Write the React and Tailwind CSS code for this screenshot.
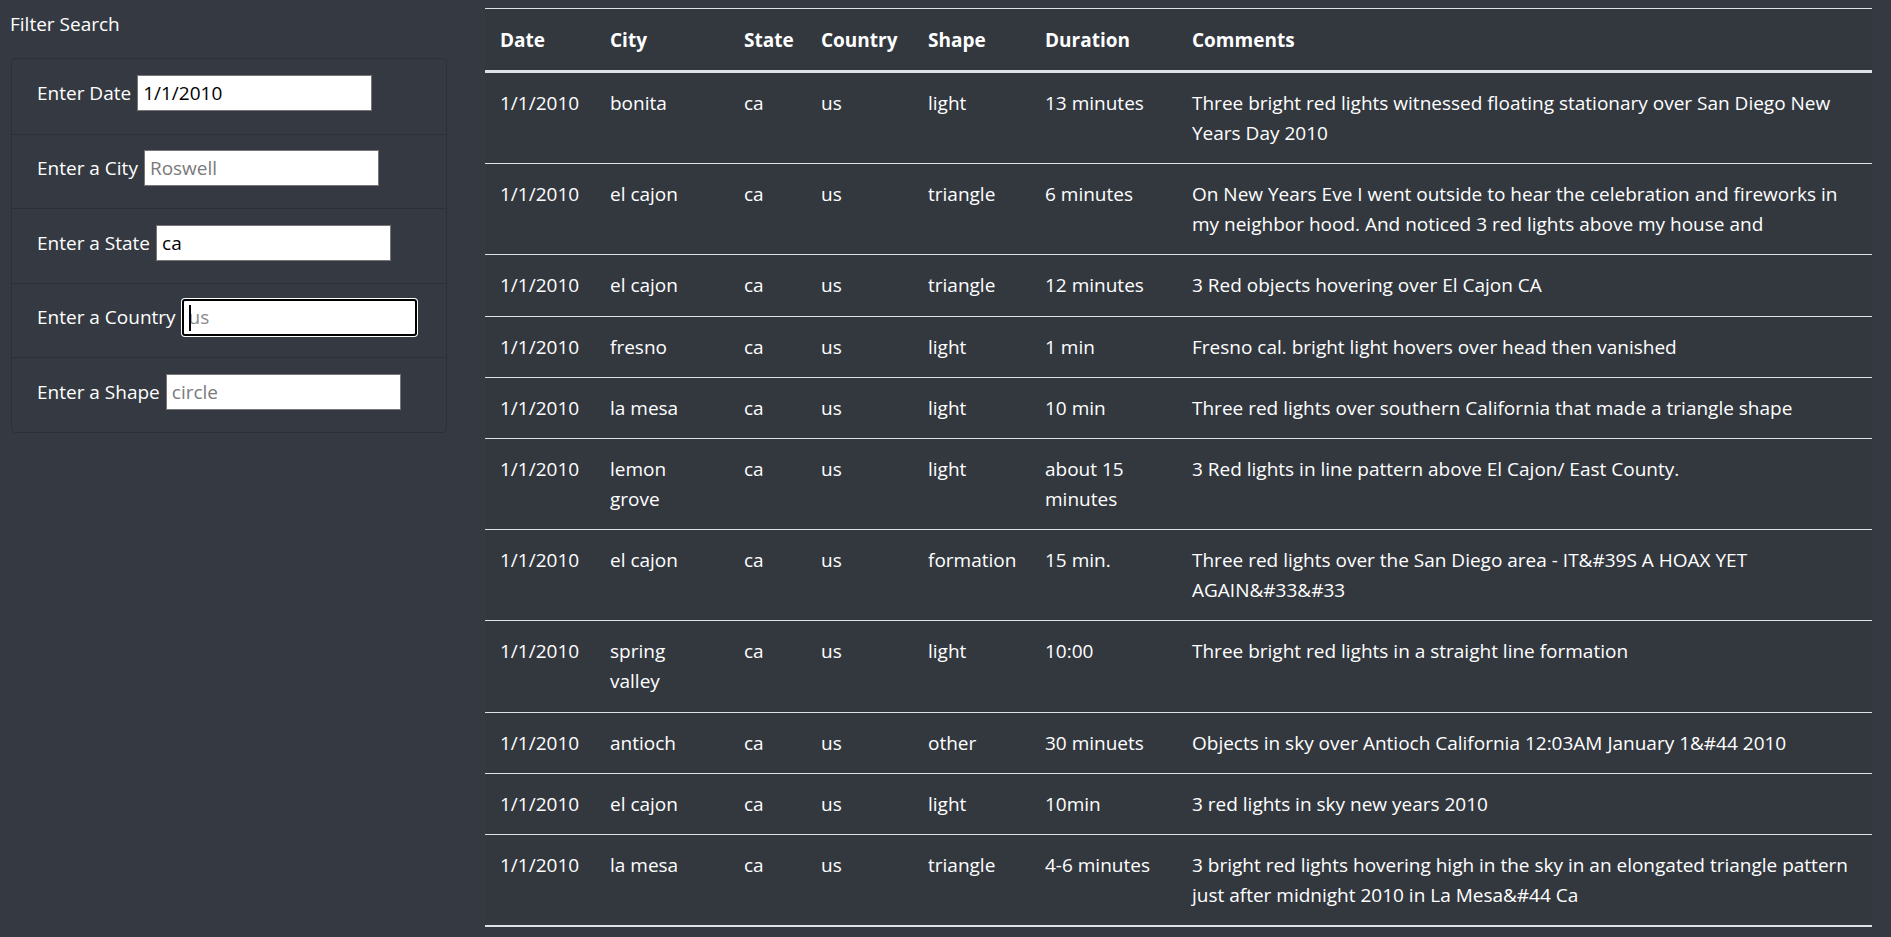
import { useState } from 'react';

const filters = [
  { id: 'date', label: 'Enter Date', value: '1/1/2010', placeholder: '' },
  { id: 'city', label: 'Enter a City', value: '', placeholder: 'Roswell' },
  { id: 'state', label: 'Enter a State', value: 'ca', placeholder: '' },
  { id: 'country', label: 'Enter a Country', value: '', placeholder: 'us', focused: true },
  { id: 'shape', label: 'Enter a Shape', value: '', placeholder: 'circle' },
];

const columns = [
  { key: 'date', label: 'Date', width: 'w-[110px]' },
  { key: 'city', label: 'City', width: 'w-[134px]' },
  { key: 'state', label: 'State', width: 'w-[77px]' },
  { key: 'country', label: 'Country', width: 'w-[107px]' },
  { key: 'shape', label: 'Shape', width: 'w-[117px]' },
  { key: 'duration', label: 'Duration', width: 'w-[147px]' },
  { key: 'comments', label: 'Comments', width: 'w-auto' },
];

// line breaks kept as they show in the report
const sightings = [
  ['1/1/2010', 'bonita', 'ca', 'us', 'light', '13 minutes', 'Three bright red lights witnessed floating stationary over San Diego New\nYears Day 2010'],
  ['1/1/2010', 'el cajon', 'ca', 'us', 'triangle', '6 minutes', 'On New Years Eve I went outside to hear the celebration and fireworks in\nmy neighbor hood. And noticed 3 red lights above my house and'],
  ['1/1/2010', 'el cajon', 'ca', 'us', 'triangle', '12 minutes', '3 Red objects hovering over El Cajon CA'],
  ['1/1/2010', 'fresno', 'ca', 'us', 'light', '1 min', 'Fresno cal. bright light hovers over head then vanished'],
  ['1/1/2010', 'la mesa', 'ca', 'us', 'light', '10 min', 'Three red lights over southern California that made a triangle shape'],
  ['1/1/2010', 'lemon\ngrove', 'ca', 'us', 'light', 'about 15\nminutes', '3 Red lights in line pattern above El Cajon/ East County.'],
  ['1/1/2010', 'el cajon', 'ca', 'us', 'formation', '15 min.', 'Three red lights over the San Diego area - IT&#39S A HOAX YET\nAGAIN&#33&#33'],
  ['1/1/2010', 'spring\nvalley', 'ca', 'us', 'light', '10:00', 'Three bright red lights in a straight line formation'],
  ['1/1/2010', 'antioch', 'ca', 'us', 'other', '30 minuets', 'Objects in sky over Antioch California 12:03AM January 1&#44 2010'],
  ['1/1/2010', 'el cajon', 'ca', 'us', 'light', '10min', '3 red lights in sky new years 2010'],
  ['1/1/2010', 'la mesa', 'ca', 'us', 'triangle', '4-6 minutes', '3 bright red lights hovering high in the sky in an elongated triangle pattern\njust after midnight 2010 in La Mesa&#44 Ca'],
];

function FilterInput({ f, value, onChange }) {
  if (f.focused) {
    return (
      <div className="relative flex h-[37px] w-[235px] items-center rounded-[3px] border-2 border-black bg-white pl-[5px] ring-1 ring-white">
        <span className="absolute left-[5px] top-[4px] h-[26px] w-[2px] bg-black" />
        <input
          value={value}
          onChange={onChange}
          placeholder={f.placeholder}
          className="w-full bg-transparent text-black outline-none placeholder:text-[#8a8a8a]"
        />
      </div>
    );
  }
  return (
    <input
      value={value}
      onChange={onChange}
      placeholder={f.placeholder}
      className="h-[36px] w-[235px] border border-[#767676] bg-white px-[5px] text-black outline-none placeholder:text-[#7a7a7a]"
    />
  );
}

export default function App() {
  const [values, setValues] = useState(Object.fromEntries(filters.map((f) => [f.id, f.value])));

  return (
    <div className="flex h-screen w-full overflow-hidden bg-[#353a42] font-['Open_Sans',sans-serif] text-[19px] leading-[30px] text-white">
      <aside className="w-[447px] shrink-0">
        <div className="pl-[10px] pt-[9px]">Filter Search</div>
        <ul className="ml-[11px] mt-[19px] w-[436px] rounded-[4px] border border-[#2c3138]">
          {filters.map((f, i) => (
            <li key={f.id} className={`h-[74.6px] pl-[25px] pt-[15.5px] ${i > 0 ? 'border-t border-[#2c3138]' : ''}`}>
              <div className="flex h-[36px] items-center">
                <label htmlFor={f.id} className="mr-[6px]">{f.label}</label>
                <FilterInput
                  f={f}
                  value={values[f.id]}
                  onChange={(e) => setValues({ ...values, [f.id]: e.target.value })}
                />
              </div>
            </li>
          ))}
        </ul>
      </aside>

      <main className="ml-[38px] w-[1387px] shrink-0 pt-[8px]">
        <table className="w-full table-fixed border-collapse bg-[#33383f] text-left">
          <colgroup>
            {columns.map((c) => <col key={c.key} className={c.width} />)}
          </colgroup>
          <thead>
            <tr className="border-t border-b-[3px] border-[#dee2e6]">
              {columns.map((c) => (
                <th key={c.key} className="px-[15px] py-[15.5px] align-bottom font-bold">{c.label}</th>
              ))}
            </tr>
          </thead>
          <tbody className="border-b-2 border-[#dee2e6]">
            {sightings.map((row, i) => (
              <tr key={i} className="border-t border-[#dee2e6]">
                {row.map((cell, j) => (
                  <td key={j} className="whitespace-pre px-[15px] py-[15.1px] align-top">{cell}</td>
                ))}
              </tr>
            ))}
          </tbody>
        </table>
      </main>
    </div>
  );
}
